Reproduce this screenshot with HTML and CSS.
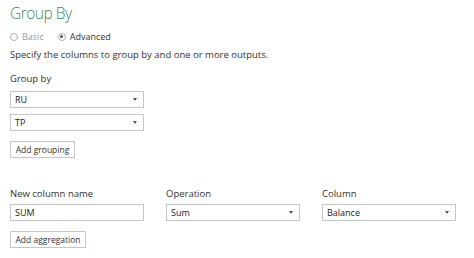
FILE: index.html
```html
<!DOCTYPE html>
<html>
<head>
<meta charset="utf-8">
<link rel="stylesheet" href="styles.css">
</head>
<body>
<div class="page">
  <h1 class="title">Group By</h1>
  <div class="radios">
    <span class="radio"><span class="dot"></span><span class="rlabel muted">Basic</span></span>
    <span class="radio"><span class="dot on"></span><span class="rlabel">Advanced</span></span>
  </div>
  <p class="desc">Specify the columns to group by and one or more outputs.</p>
  <div class="label group-label">Group by</div>
  <div class="select"><span>RU</span><span class="arrow"></span></div>
  <div class="select second"><span>TP</span><span class="arrow"></span></div>
  <button class="btn btn-group">Add grouping</button>
  <div class="agg">
    <div class="label">New column name</div>
    <div class="label">Operation</div>
    <div class="label">Column</div>
    <div class="input"><span>SUM</span></div>
    <div class="select"><span>Sum</span><span class="arrow"></span></div>
    <div class="select"><span>Balance</span><span class="arrow"></span></div>
  </div>
  <button class="btn btn-agg">Add aggregation</button>
</div>
</body>
</html>
```
FILE: styles.css
```css
html, body { margin: 0; padding: 0; background: #fff; }
body { font-family: "Open Sans", "Noto Sans", sans-serif; color: #262626; }
.page { padding: 0 0 0 10px; }
.title {
  margin: 0; padding-top: 2px;
  font-weight: 300; font-size: 15.5px; line-height: 23px;
  color: #3f8a51; letter-spacing: -0.5px;
}
.radios { display: flex; gap: 14px; margin-top: 5px; height: 13px; align-items: center; font-size: 9px; }
.radio { display: flex; align-items: center; gap: 4px; }
.dot { width: 6px; height: 6px; border: 1px solid #b0b0b0; border-radius: 50%; position: relative; }
.dot.on::after { content: ""; position: absolute; left: 1.5px; top: 1.5px; width: 3px; height: 3px; border-radius: 50%; background: #555; }
.rlabel { color: #333; }
.muted { color: #9a9a9a; }
.desc { margin: 5px 0 0; font-size: 9.5px; line-height: 14px; color: #333; }
.label { font-size: 9.5px; line-height: 14px; color: #333; }
.group-label { margin-top: 10px; }
.select, .input {
  box-sizing: border-box; width: 134px; height: 17px;
  border: 1px solid #c6c6c6; background: #fff;
  display: flex; align-items: center; justify-content: space-between;
  padding: 0 6px 0 4px; font-size: 9px; color: #222;
}
.group-label + .select { margin-top: 5px; }
.select.second { margin-top: 6px; }
.arrow { width: 0; height: 0; border-left: 2.5px solid transparent; border-right: 2.5px solid transparent; border-top: 3px solid #555; }
.btn {
  display: block; box-sizing: border-box; height: 17px;
  border: 1px solid #c6c6c6; background: #fff;
  font-family: inherit; font-size: 8.5px; color: #333; padding: 0;
  white-space: nowrap; text-align: center; line-height: 15px;
}
.btn-group { margin-top: 10px; width: 65px; }
.agg {
  margin-top: 29px;
  display: grid; grid-template-columns: 134px 134px 135px; column-gap: 22px; row-gap: 3px;
}
.btn-agg { margin-top: 10px; width: 76px; }
```
